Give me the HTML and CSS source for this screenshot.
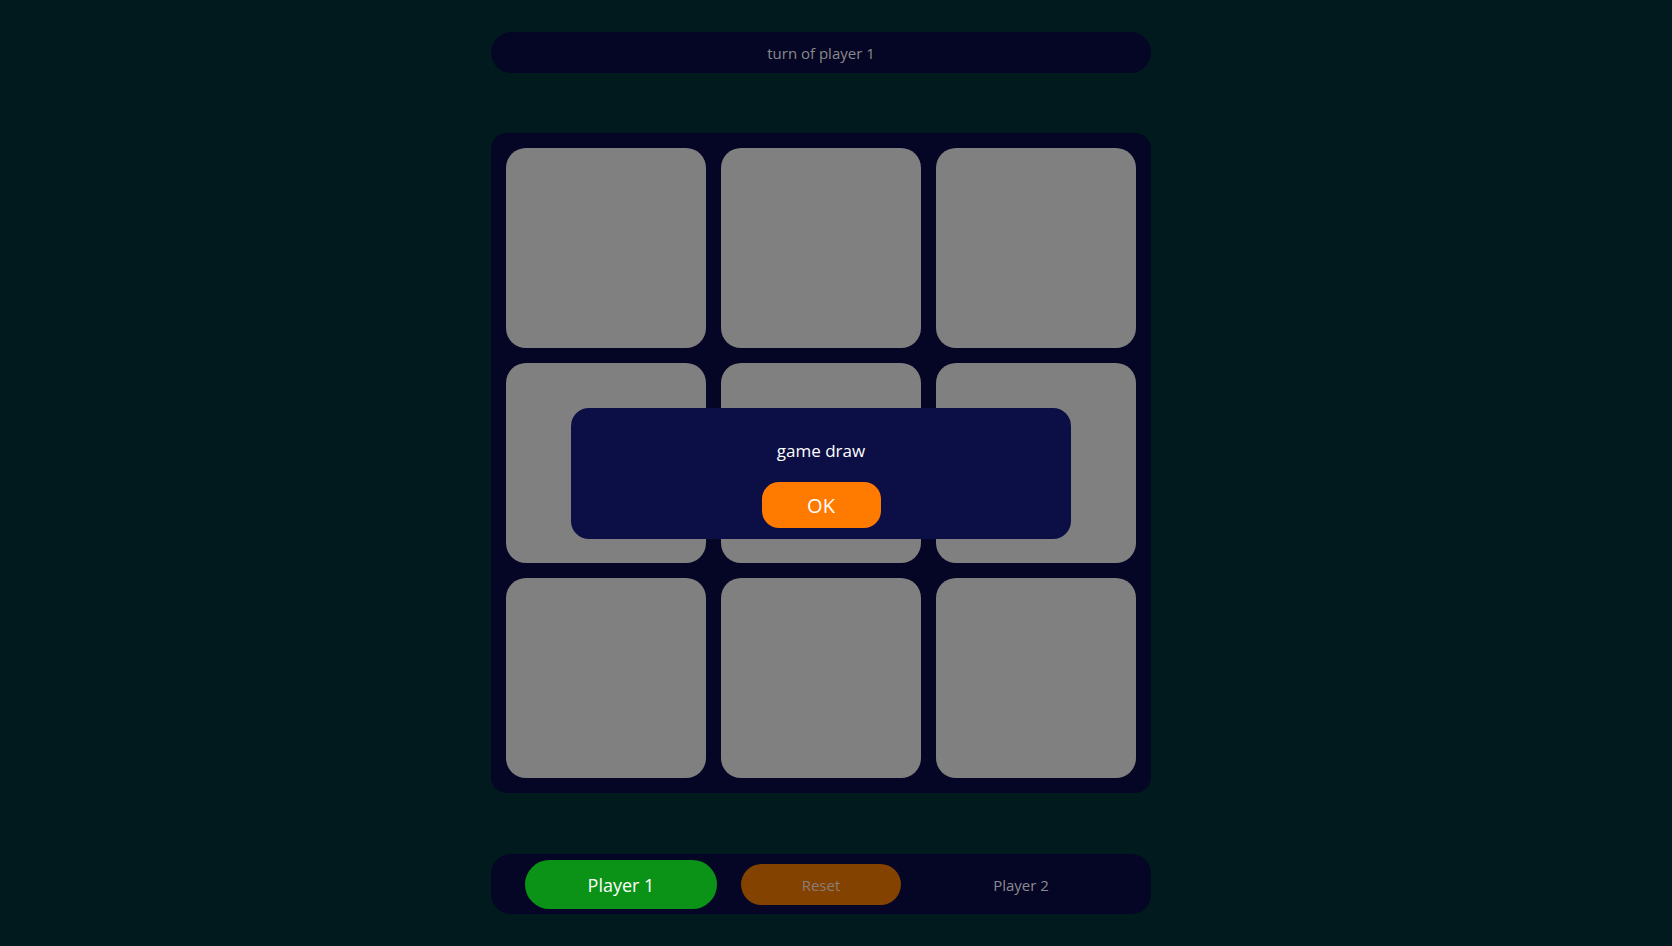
FILE: index.html
```html
<!DOCTYPE html>
<html lang="en">
<head>
<meta charset="utf-8">
<title>Tic Tac Toe</title>
<link rel="stylesheet" href="styles.css">
</head>
<body>
<div class="app">
  <div class="status">turn of player 1</div>
  <div class="board">
    <div class="cell"></div>
    <div class="cell"></div>
    <div class="cell"></div>
    <div class="cell"></div>
    <div class="cell"></div>
    <div class="cell"></div>
    <div class="cell"></div>
    <div class="cell"></div>
    <div class="cell"></div>
  </div>
  <div class="controls">
    <button class="player active">Player 1</button>
    <button class="reset">Reset</button>
    <button class="player">Player 2</button>
  </div>
</div>
<div class="dialog">
  <p class="dialog-text">game draw</p>
  <button class="ok">OK</button>
</div>
</body>
</html>
```
FILE: styles.css
```css
html, body {
  margin: 0;
  padding: 0;
  background: #001a1d;
  font-family: "Open Sans", "Noto Sans", sans-serif;
}
.app {
  display: flex;
  flex-direction: column;
  align-items: center;
  padding: 32px 30px 0 0;
}
.status {
  width: 660px;
  height: 41px;
  box-sizing: border-box;
  padding-top: 1px;
  background: #050525;
  border-radius: 21px;
  color: #8a8a8a;
  font-size: 15px;
  display: flex;
  align-items: center;
  justify-content: center;
}
.board {
  margin-top: 60px;
  width: 660px;
  box-sizing: border-box;
  padding: 15px;
  background: #050525;
  border-radius: 16px;
  display: grid;
  grid-template-columns: repeat(3, 200px);
  grid-auto-rows: 200px;
  gap: 15px;
}
.cell {
  background: #808080;
  border-radius: 20px;
}
.controls {
  margin-top: 61px;
  width: 660px;
  height: 60px;
  box-sizing: border-box;
  padding: 0 34px;
  background: #050525;
  border-radius: 20px;
  display: flex;
  align-items: center;
  gap: 24px;
}
.controls button {
  border: none;
  font-family: inherit;
  padding: 2px 0 0;
  cursor: pointer;
}
.player {
  width: 192px;
  height: 49px;
  border-radius: 25px;
  background: transparent;
  color: #8a8a8f;
  font-size: 15px;
}
.player.active {
  background: #0b9318;
  color: #ffffff;
  font-size: 18px;
}
.reset {
  width: 160px;
  height: 41px;
  border-radius: 21px;
  background: #844200;
  color: #8a7d78;
  font-size: 15px;
}
.dialog {
  position: fixed;
  top: 408px;
  left: 50%;
  margin-left: -15px;
  transform: translateX(-50%);
  width: 500px;
  box-sizing: border-box;
  padding: 32px 0 11px;
  background: #0c0f45;
  border-radius: 18px;
  display: flex;
  flex-direction: column;
  align-items: center;
}
.dialog-text {
  margin: 0;
  color: #ffffff;
  font-size: 17px;
  line-height: 22px;
}
.ok {
  margin-top: 20px;
  width: 119px;
  height: 46px;
  border: none;
  border-radius: 17px;
  background: #ff7b00;
  color: #ffffff;
  font-family: inherit;
  font-size: 20px;
  padding: 0;
}
```
